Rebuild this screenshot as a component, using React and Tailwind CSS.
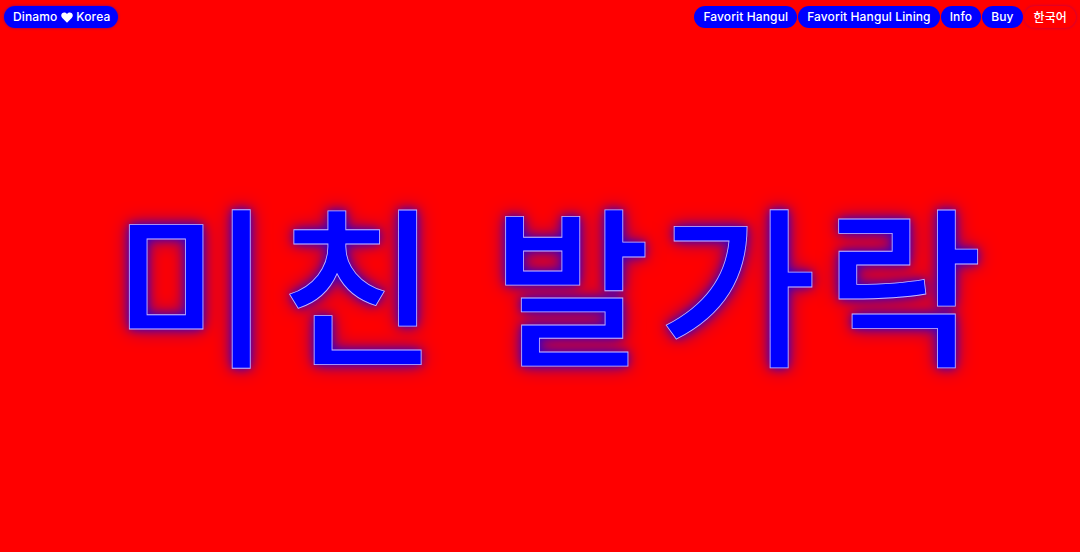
const links = ['Favorit Hangul', 'Favorit Hangul Lining', 'Info', 'Buy'];

const Pill = ({ children, className = 'bg-[#0000ff]' }) => (
  <a className={`flex h-[22px] items-center rounded-full px-[9px] text-[12px] font-medium tracking-[0.12px] text-white whitespace-nowrap ${className}`}>
    {children}
  </a>
);

export default function App() {
  return (
    <div className="flex h-[552px] w-[1080px] flex-col overflow-hidden bg-[#ff0000] font-['Inter','Noto_Sans_CJK_KR',sans-serif]">
      <header className="flex items-start justify-between px-[4px] pt-[6px]">
        <Pill className="bg-[#0000ff] pr-[8px] shadow-[0_0_3px_rgba(0,0,255,0.5)]">
          <span>Dinamo</span>
          <svg className="ml-[4px] mr-[3px] h-[11px] w-[12px]" viewBox="0 0 24 22" fill="white">
            <path d="M12 21.5 2.6 12.2C-.2 9.4-.2 5.2 2.3 2.7c2.6-2.5 6.7-2.3 9.7 1.2 3-3.5 7.1-3.7 9.7-1.2 2.5 2.5 2.5 6.7-.3 9.5z" />
          </svg>
          <span>Korea</span>
        </Pill>
        <nav className="flex gap-[1px]">
          {links.map(label => (
            <Pill key={label}>{label}</Pill>
          ))}
          <Pill className="bg-[#ff0000] pl-[10px] font-['Noto_Sans_CJK_KR',sans-serif] shadow-[0_0_3px_rgba(120,0,160,0.6)]">한국어</Pill>
        </nav>
      </header>

      <main className="flex flex-1 items-center justify-center pb-[24px] pl-[24px]">
        <h1 className="whitespace-nowrap font-['Noto_Sans_CJK_KR',sans-serif] text-[172px] font-medium leading-none tracking-[8px] text-[#0000ff] [-webkit-text-stroke:0.8px_#c8b8ff] [text-shadow:0_0_10px_rgba(0,0,255,0.8),0_0_20px_rgba(0,0,255,0.6)]">
          미친 발가락
        </h1>
      </main>
    </div>
  );
}
